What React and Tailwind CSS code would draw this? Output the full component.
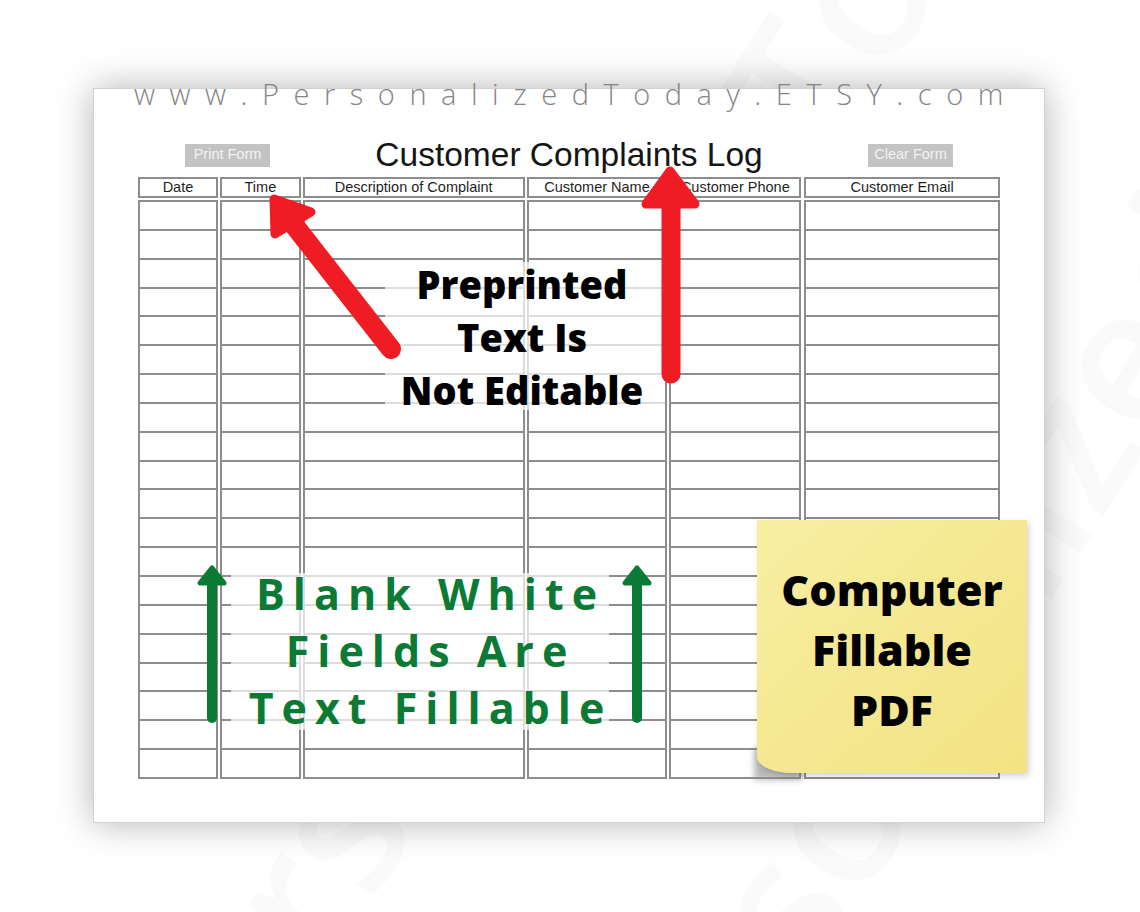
const columns = [
  { label: "Date", w: "w-[80px]" },
  { label: "Time", w: "w-[81px]" },
  { label: "Description of Complaint", w: "w-[222px]" },
  { label: "Customer Name", w: "w-[141px]" },
  { label: "Customer Phone", w: "w-[132px]" },
  { label: "Customer Email", w: "w-[196px]" },
];

const rows = Array.from({ length: 20 }, (_, i) => i);

function Column({ label, w, last }) {
  return (
    <div className={`flex flex-col ${w} ${last ? "ml-[1px]" : ""}`}>
      <div className="h-[21px] border-2 border-[#8d8d8d] flex items-center justify-center text-[14.5px] text-[#1f1f1f] leading-none whitespace-nowrap">
        {label}
      </div>
      <div className="mt-[2px] h-[579px] border-2 border-[#8d8d8d] flex flex-col">
        {rows.map((r) => (
          <div key={r} className="flex-1 border-b-2 border-[#8d8d8d] last:border-b-0" />
        ))}
      </div>
    </div>
  );
}

function Arrows() {
  return (
    <svg className="absolute left-0 top-0 pointer-events-none" width="1140" height="912" viewBox="0 0 1140 912">
      {/* red diagonal */}
      <line x1="294" y1="225" x2="391" y2="349" stroke="#ef1c24" strokeWidth="20" strokeLinecap="round" />
      <polygon points="274,199 311,212 275,234" fill="#ef1c24" stroke="#ef1c24" strokeWidth="9" strokeLinejoin="round" />
      {/* red vertical */}
      <line x1="671" y1="200" x2="671" y2="374" stroke="#ef1c24" strokeWidth="19" strokeLinecap="round" />
      <polygon points="670,171 646,204 695,204" fill="#ef1c24" stroke="#ef1c24" strokeWidth="9" strokeLinejoin="round" />
      {/* green left */}
      <line x1="212" y1="582" x2="212" y2="718" stroke="#0b7a34" strokeWidth="10" strokeLinecap="round" />
      <polygon points="212,568 200,583 224,583" fill="#0b7a34" stroke="#0b7a34" strokeWidth="5" strokeLinejoin="round" />
      {/* green right */}
      <line x1="637" y1="582" x2="637" y2="718" stroke="#0b7a34" strokeWidth="10" strokeLinecap="round" />
      <polygon points="637,568 625,583 649,583" fill="#0b7a34" stroke="#0b7a34" strokeWidth="5" strokeLinejoin="round" />
    </svg>
  );
}

export default function App() {
  return (
    <div className="relative w-[1140px] h-[912px] overflow-hidden bg-white font-['Liberation_Sans',Arial,sans-serif]">
      {/* faint watermark */}
      <div className="absolute inset-0 pointer-events-none select-none font-['Open_Sans',sans-serif] font-semibold text-black/[0.018]">
        <div className="absolute left-[-260px] top-[300px] text-[190px] leading-none -rotate-[58deg] whitespace-nowrap">PersonalizedToday</div>
        <div className="absolute left-[180px] top-[380px] text-[190px] leading-none -rotate-[58deg] whitespace-nowrap">PersonalizedToday</div>
        <div className="absolute left-[620px] top-[380px] text-[190px] leading-none -rotate-[58deg] whitespace-nowrap">PersonalizedToday</div>
      </div>

      <div className="pl-[93px] pt-[88px]">
        <div className="relative w-[952px] h-[735px] bg-white border border-[#d2d2d2] shadow-[0_0_34px_rgba(0,0,0,0.3)] px-[44px] pt-[49px]">
          <div className="flex items-center justify-between h-[34px] px-[47px]">
            <div className="w-[85px] h-[23px] bg-[#c3c3c3] text-[#f2f2f2] text-[14.5px] flex items-center justify-center">Print Form</div>
            <div className="text-[33.5px] text-[#151515] leading-none">Customer Complaints Log</div>
            <div className="w-[85px] h-[23px] bg-[#c3c3c3] text-[#f2f2f2] text-[14.5px] flex items-center justify-center">Clear Form</div>
          </div>
          <div className="mt-[5px] flex gap-[2px]">
            {columns.map((c, i) => (
              <Column key={c.label} {...c} last={i === columns.length - 1} />
            ))}
          </div>
        </div>
      </div>

      {/* url banner */}
      <div className="absolute left-[134px] top-[79px] text-[29px] leading-none font-['Open_Sans',sans-serif] font-light text-[#858585] tracking-[14.55px] whitespace-nowrap">
        www.PersonalizedToday.ETSY.com
      </div>

      {/* preprinted note */}
      <div className="absolute left-[385px] top-[262px] w-[280px] h-[148px] bg-white/70" />
      <div className="absolute left-[372px] top-[258px] w-[300px] text-center font-['Open_Sans',sans-serif] font-extrabold text-[38px] leading-[53px] text-black">
        Preprinted<br />Text Is<br />Not Editable
      </div>

      {/* fillable note */}
      <div className="absolute left-[231px] top-[573px] w-[378px] h-[157px] bg-white/70" />
      <div className="absolute left-[220px] top-[565px] w-[420px] pl-[1px] text-center font-['Open_Sans',sans-serif] font-bold text-[43px] leading-[57px] tracking-[8px] text-[#0b7a34] whitespace-nowrap">
        Blank White<br />Fields Are<br />Text Fillable
      </div>

      {/* sticky note */}
      <div className="absolute left-[754px] top-[748px] w-[48px] h-[32px] bg-[#8a8a8a]/60 blur-[3px]" />
      <div className="absolute left-[757px] top-[520px] w-[270px] h-[253px] rounded-bl-[36px_16px] bg-linear-to-br from-[#f8efa3] via-[#f5e891] to-[#f3e384] shadow-[2px_3px_6px_rgba(0,0,0,0.18)] flex flex-col items-center justify-center pt-[6px] font-['Open_Sans',sans-serif] font-extrabold text-[43px] leading-[60px] text-black">
        <div>Computer</div>
        <div>Fillable</div>
        <div>PDF</div>
      </div>

      <Arrows />
    </div>
  );
}
